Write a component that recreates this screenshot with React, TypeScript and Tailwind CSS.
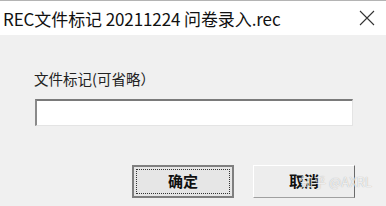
import React from "react";

const font = { fontFamily: '"Noto Sans CJK SC", "Noto Sans", sans-serif' };

const CloseIcon = () => (
  <svg width="16" height="16" viewBox="0 0 16 16" className="text-[#333]">
    <path d="M1 1 L15 15 M15 1 L1 15" stroke="currentColor" strokeWidth="1.1" fill="none" />
  </svg>
);

export default function App() {
  return (
    <div
      className="relative w-[386px] h-[206px] overflow-hidden bg-[#f0f0f0] font-['Noto_Sans_CJK_SC','Noto_Sans',sans-serif] text-black"
    >
      {/* title bar */}
      <div className="flex h-[35px] items-center justify-between border-t border-[#b4b4b4] bg-white pl-[3px] pr-[11px]">
        <span className="text-[17px] leading-none tracking-[-0.1px] text-[#111]">
          REC文件标记 20211224 问卷录入.rec
        </span>
        <CloseIcon />
      </div>

      {/* body */}
      <div className="flex flex-col pl-[34px] pt-[35px]">
        <span className="text-[14.5px] leading-[18px] text-[#222]">文件标记(可省略）</span>
        <div className="ml-[1px] mt-[11px] h-[27px] w-[318px] border-l-2 border-t-2 border-b border-r border-l-[#8a8a8a] border-t-[#7a7a7a] border-b-[#e4e4e4] border-r-[#e4e4e4] bg-white" />
      </div>

      <div className="flex gap-[19px] pl-[132px] pt-[39px]">
        <button className="flex h-[33px] w-[102px] items-center justify-center border-2 border-[#7f7f7f] bg-[#e6e6e6] p-[2px]">
          <span className="flex h-full w-full items-center justify-center border border-dotted border-[#333] text-[15px] font-semibold text-[#111]">
            确定
          </span>
        </button>
        <button className="flex h-[33px] w-[102px] items-center justify-center border border-t-white border-l-white border-b-[#a0a0a0] border-r-[#6a6a6a] bg-[#ededed] text-[15px] font-semibold text-[#111]">
          取消
        </button>
      </div>

      {/* watermark */}
      <span
        className="absolute left-[300px] top-[175px] text-[13px] leading-none text-white/80 [text-shadow:0_0_1px_rgba(0,0,0,0.35)]"
        style={font}
      >
        知乎 @AXRL
      </span>
    </div>
  );
}
